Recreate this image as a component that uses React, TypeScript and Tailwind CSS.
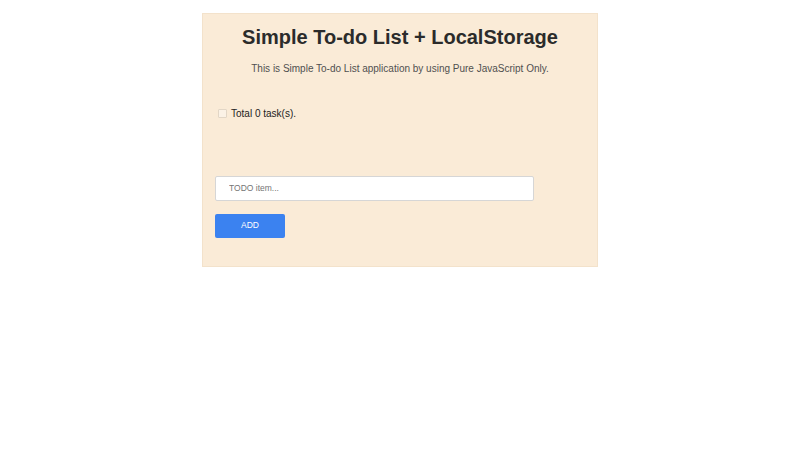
import React from "react";

export default function App() {
    return (
        <div className="min-h-[450px] bg-white pt-[13px]" style={{ fontFamily: '"Liberation Sans", Arial, sans-serif' }}>
            <div className="mx-auto w-[396px] h-[254px] bg-[#faebd7] border border-[#f3e2cb] px-[12px]">
                <h1 className="text-center font-bold text-[#2b2b2b] text-[20px] leading-none mt-[13px]">
                    Simple To-do List + LocalStorage
                </h1>
                <p className="text-center text-[#505050] text-[10px] mt-[14px]">
                    This is Simple To-do List application by using Pure JavaScript Only.
                </p>

                {/* Task list */}
                <div className="flex items-center mt-[30px] ml-[3px]">
                    <span className="w-[9px] h-[9px] border border-[#e2d6c6] bg-[#fbf2e6] rounded-[1px] mr-[4px]"></span>
                    <span className="text-[10px] text-[#222]">Total 0 task(s).</span>
                </div>

                {/* Add form */}
                <div className="mt-[53px]">
                    <input
                        type="text"
                        placeholder="TODO item..."
                        className="w-[319px] h-[25px] bg-white border border-[#d6d6d6] rounded-[2px] pl-[13px] text-[8.5px] placeholder:text-[#757575] outline-none"
                    />
                </div>
                <button className="mt-[13px] w-[70px] h-[24px] bg-[#3b82f0] rounded-[2px] text-white text-[8.5px]">
                    ADD
                </button>
            </div>
        </div>
    );
}
